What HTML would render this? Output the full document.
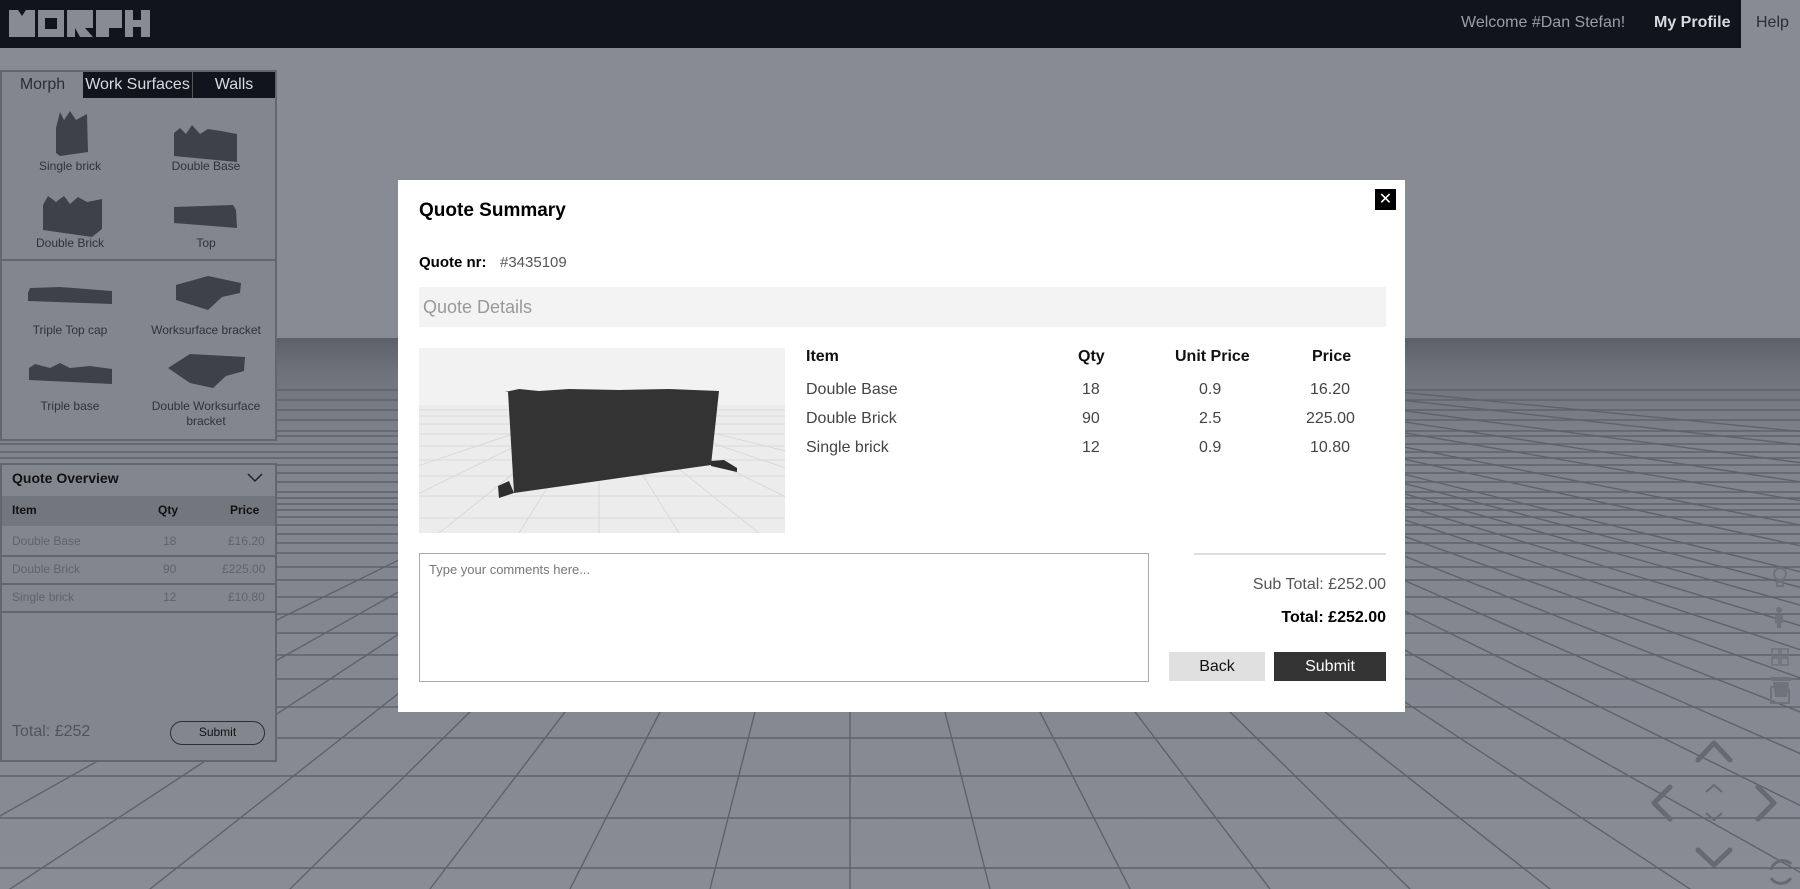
<!DOCTYPE html>
<html style="overflow:hidden"><head><meta charset="utf-8"><style>
*{margin:0;padding:0;box-sizing:border-box}
html{width:1800px;height:889px;overflow:hidden}
body{width:1800px;height:889px;overflow:hidden;position:relative;background:#878b94;font-family:"Liberation Sans",sans-serif}
.a{position:absolute}
.hdr{left:0;top:0;width:1800px;height:48px;background:#10141c}
.panel{background:#82868f;border:2px solid #62666e}
.lbl{position:absolute;font-size:12px;color:#2e323a;text-align:center;width:130px}
.ot{font-size:12px;color:#5f636b}
.m{background:#fff}
.th{font-size:16px;font-weight:bold;color:#111;position:absolute}
.td{font-size:16px;color:#444;position:absolute}
</style></head><body>
<svg class="a" style="left:0;top:0" width="1800" height="889">
<defs><linearGradient id="fl" x1="0" y1="338" x2="0" y2="889" gradientUnits="userSpaceOnUse">
<stop offset="0" stop-color="#5b6069"/><stop offset="0.06" stop-color="#6e727b"/><stop offset="0.2" stop-color="#80848d"/><stop offset="1" stop-color="#888c95"/></linearGradient></defs>
<rect x="0" y="338" width="1800" height="551" fill="url(#fl)"/>
<g stroke="#5e626b" stroke-width="1.4" fill="none">
<path d="M0 868H1800M0 818H1800M0 776H1800M0 738H1800M0 707H1800M0 679H1800M0 655H1800M0 633H1800M0 614H1800M0 597H1800M0 580H1800M0 567H1800M0 553H1800M0 543H1800M0 534H1800M0 525H1800M0 517H1800M0 510H1800M0 504H1800M0 498H1800M0 492H1800M0 482H1800M0 473H1800M0 465H1800M0 458H1800M0 452H1800M0 444H1800M0 436H1800M0 431H1800M0 420H1800M0 410H1800M0 400H1800M0 390H1800"/>
<path d="M850 338L-2510 1991M850 338L-2090 1991M850 338L-1670 1991M850 338L-1250 1991M850 338L-830 1991M850 338L-410 1991M850 338L10 1991M850 338L430 1991M850 338L850 1991M850 338L1270 1991M850 338L1690 1991M850 338L2110 1991M850 338L2530 1991M850 338L2950 1991M850 338L3370 1991M850 338L3790 1991M850 338L4210 1991M850 338L4630 1991M850 338L5050 1991M850 338L5470 1991M850 338L5890 1991M850 338L6310 1991M850 338L6730 1991M850 338L7150 1991M850 338L7570 1991M850 338L8410 1991M850 338L9250 1991M850 338L10510 1991M850 338L11770 1991M850 338L13450 1991M850 338L15550 1991M850 338L17650 1991"/>
</g>
</svg>
<div class="a hdr"></div>
<svg class="a" style="left:9px;top:10px" width="141" height="28" viewBox="0 0 141 28" fill="#878b94">
<path d="M0 0H26V27H0Z M9 0L13 6L17 0Z" fill-rule="evenodd"/>
<rect x="29" y="0" width="26" height="27"/><rect x="36" y="8" width="12" height="11" fill="#10141c"/>
<path d="M58 0H84V18L76 18L84 27H71L66 18H66V27H58Z"/>
<path d="M87 0H113V18H100V27H87Z"/>
<path d="M116 0H124V10H132V0H141V27H132V17H124V27H116Z"/>
</svg>
<div class="a" style="left:1461px;top:14px;font-size:16px;color:#9a9ea6">Welcome #Dan Stefan!</div>
<div class="a" style="left:1654px;top:14px;font-size:16px;color:#d8dadd;font-weight:bold">My Profile</div>
<div class="a" style="left:1741px;top:0;width:59px;height:48px;background:#878b94;color:#2a2e36;font-size:16px;padding:14px 0 0 15px">Help</div>

<div class="a panel" style="left:0;top:70px;width:277px;height:371px"></div>
<div class="a" style="left:2px;top:72px;width:81px;height:26px;font-size:16px;color:#2a2e36;text-align:center;line-height:26px">Morph</div>
<div class="a" style="left:83px;top:72px;width:110px;height:26px;background:#10141c;color:#d8dadd;font-size:16px;text-align:center;line-height:26px;border-right:1px solid #555">Work Surfaces</div>
<div class="a" style="left:193px;top:72px;width:82px;height:26px;background:#10141c;color:#d8dadd;font-size:16px;text-align:center;line-height:26px">Walls</div>
<div class="a" style="left:2px;top:259px;width:273px;height:2px;background:#62666e"></div>
<svg class="a" style="left:0;top:98px" width="276" height="330" fill="#3d414a">
<path d="M56 30L60 14L64 22L70 13L76 22L87 16L88 54L60 58L56 55Z"/>
<path d="M174 35L180 30L186 36L192 27L200 36L208 31L221 33L237 36L237 64L174 58Z"/>
<path d="M43 107L48 98L56 104L64 98L70 106L78 99L87 104L102 101L102 131L92 139L43 132Z"/>
<path d="M174 109L233 107L236 112L237 130L174 125Z"/>
<path d="M28 195L30 190L60 189L112 193L112 206L28 203Z"/>
<path d="M176 187L208 178L241 185L240 195L222 199L208 212L176 202Z"/>
<path d="M29 270L35 266L50 270L60 265L70 270L90 268L112 271L112 286L29 282Z"/>
<path d="M168 270L190 256L245 259L244 273L226 278L213 290L190 285Z"/>
</svg>
<div class="lbl" style="left:5px;top:159px">Single brick</div>
<div class="lbl" style="left:141px;top:159px">Double Base</div>
<div class="lbl" style="left:5px;top:236px">Double Brick</div>
<div class="lbl" style="left:141px;top:236px">Top</div>
<div class="lbl" style="left:5px;top:323px">Triple Top cap</div>
<div class="lbl" style="left:141px;top:323px">Worksurface bracket</div>
<div class="lbl" style="left:5px;top:399px">Triple base</div>
<div class="lbl" style="left:141px;top:399px;line-height:15px">Double Worksurface bracket</div>

<div class="a panel" style="left:0;top:463px;width:277px;height:299px"></div>
<div class="a" style="left:12px;top:470px;font-size:14px;font-weight:bold;color:#111">Quote Overview</div>
<svg class="a" style="left:247px;top:472px" width="16" height="12"><path d="M1 2L8 9L15 2" stroke="#222" stroke-width="1.5" fill="none"/></svg>
<div class="a" style="left:2px;top:496px;width:273px;height:30px;background:#72767f"></div>
<div class="a" style="left:12px;top:503px;font-size:12px;font-weight:bold;color:#111">Item</div>
<div class="a" style="left:158px;top:503px;font-size:12px;font-weight:bold;color:#111">Qty</div>
<div class="a" style="left:230px;top:503px;font-size:12px;font-weight:bold;color:#111">Price</div>
<div class="a" style="left:2px;top:555px;width:273px;height:2px;background:#62666e"></div>
<div class="a" style="left:2px;top:583px;width:273px;height:2px;background:#62666e"></div>
<div class="a" style="left:2px;top:611px;width:273px;height:2px;background:#62666e"></div>
<div class="a ot" style="left:12px;top:534px">Double Base</div><div class="a ot" style="left:163px;top:534px">18</div><div class="a ot" style="left:228px;top:534px">£16.20</div>
<div class="a ot" style="left:12px;top:562px">Double Brick</div><div class="a ot" style="left:163px;top:562px">90</div><div class="a ot" style="left:222px;top:562px">£225.00</div>
<div class="a ot" style="left:12px;top:590px">Single brick</div><div class="a ot" style="left:163px;top:590px">12</div><div class="a ot" style="left:228px;top:590px">£10.80</div>
<div class="a" style="left:12px;top:723px;font-size:16px;color:#50545c">Total: £252</div>
<div class="a" style="left:170px;top:721px;width:95px;height:24px;border:1.5px solid #2a2e36;border-radius:12px;font-size:12px;color:#111;text-align:center;line-height:21px">Submit</div>

<svg class="a" style="left:1640px;top:560px" width="160" height="329" fill="none" stroke="#6e727b" stroke-width="2">
<circle cx="140" cy="14" r="6"/><path d="M137 22H143V26H137Z"/>
<g fill="#6e727b" stroke="none"><circle cx="139" cy="50" r="3"/><path d="M135 55H143V63H141V68H137V63H135Z"/>
<path d="M131 117H151V121H131Z M133 122H149L147 137H135Z"/></g>
<path d="M132 89H139V96H132Z M141 89H148V96H141Z M132 98H139V105H132Z M141 98H148V105H141Z" stroke-width="1.5"/>
<path d="M131 130H146L149 133V146H131Z" transform="translate(0,-3)"/>
<g stroke="#666a73" stroke-width="5" stroke-linecap="round" stroke-linejoin="round">
<path d="M58 200L74 183L90 200"/><path d="M58 290L74 305L90 290"/>
<path d="M30 227L14 243L30 259"/><path d="M118 227L134 243L118 259"/>
</g>
<g stroke="#666a73" stroke-width="2"><path d="M66 232L74 225L82 232"/><path d="M66 253L74 260L82 253"/></g>
<path d="M131 310A12 12 0 0 1 151 304M151 318A12 12 0 0 1 131 318" stroke="#666a73" stroke-width="3"/>
</svg>

<div class="a m" style="left:398px;top:180px;width:1007px;height:532px"></div>
<div class="a" style="left:1375px;top:189px;width:21px;height:21px;background:#000;color:#fff;font-size:16px;text-align:center;line-height:21px">✕</div>
<div class="a" style="left:419px;top:200px;font-size:19px;font-weight:bold;color:#000">Quote Summary</div>
<div class="a" style="left:419px;top:254px;font-size:15px;font-weight:bold;color:#000">Quote nr:</div>
<div class="a" style="left:500px;top:254px;font-size:15px;color:#555">#3435109</div>
<div class="a" style="left:419px;top:287px;width:967px;height:40px;background:#f3f3f3;font-size:18px;color:#999;padding:10px 4px">Quote Details</div>
<svg class="a" style="left:419px;top:348px" width="366" height="185">
<rect width="366" height="185" fill="#ececec"/>
<rect width="366" height="57" fill="#f2f2f2"/>
<g stroke="#d4d4d4" stroke-width="0.8">
<path d="M0 62H366M0 68H366M0 76H366M0 86H366M0 98H366M0 112H366M0 128H366M0 148H366M0 170H366"/>
<path d="M180 57L-200 185M180 57L-80 185M180 57L20 185M180 57L100 185M180 57L180 185M180 57L260 185M180 57L340 185M180 57L440 185M180 57L560 185M180 57L700 185"/>
</g>
<path d="M86 44L100 41L120 43L150 41L200 42L250 41L300 43L292 117L95 145L89 44Z" fill="#333"/>
<path d="M79 138L90 133L95 145L80 150Z" fill="#2e2e2e"/>
<path d="M292 113L305 112L318 120L318 124L292 118Z" fill="#2e2e2e"/>
</svg>
<div class="th" style="left:806px;top:348px">Item</div>
<div class="th" style="left:1078px;top:348px">Qty</div>
<div class="th" style="left:1175px;top:348px">Unit Price</div>
<div class="th" style="left:1312px;top:348px">Price</div>
<div class="td" style="left:806px;top:381px">Double Base</div><div class="td" style="left:1082px;top:381px">18</div><div class="td" style="left:1199px;top:381px">0.9</div><div class="td" style="left:1310px;top:381px">16.20</div>
<div class="td" style="left:806px;top:410px">Double Brick</div><div class="td" style="left:1082px;top:410px">90</div><div class="td" style="left:1199px;top:410px">2.5</div><div class="td" style="left:1306px;top:410px">225.00</div>
<div class="td" style="left:806px;top:439px">Single brick</div><div class="td" style="left:1082px;top:439px">12</div><div class="td" style="left:1199px;top:439px">0.9</div><div class="td" style="left:1310px;top:439px">10.80</div>
<div class="a" style="left:419px;top:553px;width:730px;height:129px;border:1.5px solid #aaa"></div>
<div class="a" style="left:429px;top:562px;font-size:13px;color:#777">Type your comments here...</div>
<div class="a" style="left:1194px;top:553px;width:192px;height:2px;background:#ddd"></div>
<div class="a" style="left:1250px;top:576px;width:136px;text-align:right;font-size:16px;color:#555">Sub Total: £252.00</div>
<div class="a" style="left:1230px;top:609px;width:156px;text-align:right;font-size:16px;font-weight:bold;color:#000">Total: £252.00</div>
<div class="a" style="left:1169px;top:652px;width:96px;height:29px;background:#e0e0e0;color:#111;font-size:16px;text-align:center;line-height:29px">Back</div>
<div class="a" style="left:1274px;top:652px;width:112px;height:29px;background:#333;color:#fff;font-size:16px;text-align:center;line-height:29px">Submit</div>
</body></html>
